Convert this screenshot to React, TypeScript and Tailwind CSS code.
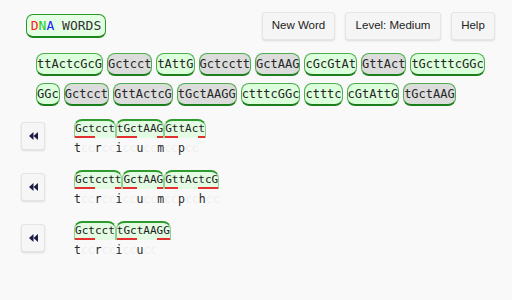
import React from 'react';

const MONO = { fontFamily: '"DejaVu Sans Mono", monospace' };

// strand pool, g = light green chip, x = grey chip
const POOL: [string, 'g' | 'x'][][] = [
  [
    ['ttActcGcG', 'g'],
    ['Gctcct', 'x'],
    ['tAttG', 'g'],
    ['Gctcctt', 'x'],
    ['GctAAG', 'x'],
    ['cGcGtAt', 'g'],
    ['GttAct', 'x'],
    ['tGctttcGGc', 'g'],
  ],
  [
    ['GGc', 'g'],
    ['Gctcct', 'x'],
    ['GttActcG', 'x'],
    ['tGctAAGG', 'x'],
    ['ctttcGGc', 'g'],
    ['ctttc', 'g'],
    ['cGtAttG', 'g'],
    ['tGctAAG', 'x'],
  ],
];

const WORDS: { chips: string[]; letters: string }[] = [
  { chips: ['Gctcct', 'tGctAAG', 'GttAct'], letters: 'triump' },
  { chips: ['Gctcctt', 'GctAAG', 'GttActcG'], letters: 'triumph' },
  { chips: ['Gctcct', 'tGctAAGG'], letters: 'triu' },
];

const PoolChip: React.FC<{ text: string; kind: 'g' | 'x' }> = ({ text, kind }) => (
  <span
    className={
      'inline-block h-[23px] rounded-[8px] border border-[#4fae4f] border-b-2 border-b-[#1c7f1c] px-0 text-[12px] leading-[20px] text-[#262626] ' +
      (kind === 'g' ? 'bg-[#dcffdc]' : 'bg-[#dcdcdc]')
    }
    style={MONO}
  >
    {text}
  </span>
);

const BackButton = () => (
  <button className="mt-[3px] flex h-[28px] w-[24px] items-center justify-center rounded-[3px] border border-[#e4e4e4] bg-[#f6f6f6] shadow-[0_1px_2px_rgba(0,0,0,0.12)]">
    <svg width="9" height="8" viewBox="0 0 9 8">
      <path d="M4.5 0 L0 4 L4.5 8 Z" fill="#1c1c45" />
      <path d="M9 0 L4.5 4 L9 8 Z" fill="#1c1c45" />
    </svg>
  </button>
);

const WordRow: React.FC<{ chips: string[]; letters: string }> = ({ chips, letters }) => {
  let idx = 0;
  return (
    <div className="flex items-start">
      <BackButton />
      <div className="ml-[29px] flex flex-col" style={MONO}>
        <div className="flex">
          {chips.map((c, ci) => (
            <span
              key={ci}
              className="flex h-[19px] items-end rounded-t-[8px] border-t-2 border-x border-t-[#2f9a2f] border-x-[#8fd08f] bg-[#e2fbe2] text-[11px] leading-[15px] text-[#1d1d1d]"
            >
              {c.split('').map((ch, k) => {
                const i = idx++;
                const under = Math.floor(i / 3) % 2 === 0;
                return (
                  <span
                    key={k}
                    className={under ? 'border-b-2 border-[#e53030]' : 'border-b-2 border-transparent'}
                  >
                    {ch}
                  </span>
                );
              })}
            </span>
          ))}
        </div>
        <div className="mt-[3px] text-[11.5px] leading-[15px] text-[#2a2a2a]">
          {letters.split('').map((l, k) => (
            <span key={k}>
              {l}
              <span className="text-[#efefef]">cc</span>
            </span>
          ))}
        </div>
      </div>
    </div>
  );
};

export default function App() {
  return (
    <div className="h-[300px] w-full overflow-hidden bg-[#f9f9f9]">
      {/* header */}
      <div className="flex items-center justify-between pl-[26px] pr-[17px] pt-[12px]">
        <div
          className="flex h-[24px] w-[80px] items-center justify-center rounded-[7px] border border-[#279a27] border-b-2 border-b-[#1d861d] bg-[#e4ffe4] text-[13px]"
          style={MONO}
        >
          <span className="text-[#ff2222]">D</span>
          <span className="text-[#1fcc1f]">N</span>
          <span className="text-[#2020ff]">A</span>
          <span className="text-[#333]">&nbsp;WORDS</span>
        </div>
        <div
          className="flex gap-[10px] text-[11.5px] text-[#222]"
          style={{ fontFamily: '"Liberation Sans", Arial, sans-serif' }}
        >
          <button className="h-[28px] w-[73px] rounded-[3px] border border-[#e6e6e6] bg-[#f5f5f5] shadow-[0_1px_2px_rgba(0,0,0,0.12)]">
            New Word
          </button>
          <button className="h-[28px] w-[96px] rounded-[3px] border border-[#e6e6e6] bg-[#f5f5f5] shadow-[0_1px_2px_rgba(0,0,0,0.12)]">
            Level: Medium
          </button>
          <button className="h-[28px] w-[44px] rounded-[3px] border border-[#e6e6e6] bg-[#f5f5f5] shadow-[0_1px_2px_rgba(0,0,0,0.12)]">
            Help
          </button>
        </div>
      </div>

      {/* strand pool */}
      <div className="mt-[13px] flex flex-col gap-[7px] pl-[36px]">
        {POOL.map((row, ri) => (
          <div key={ri} className="flex gap-[4px]">
            {row.map(([t, k], i) => (
              <PoolChip key={i} text={t} kind={k} />
            ))}
          </div>
        ))}
      </div>

      {/* built words */}
      <div className="mt-[13px] flex flex-col gap-[14px] pl-[21px]">
        {WORDS.map((w, i) => (
          <WordRow key={i} chips={w.chips} letters={w.letters} />
        ))}
      </div>
    </div>
  );
}
